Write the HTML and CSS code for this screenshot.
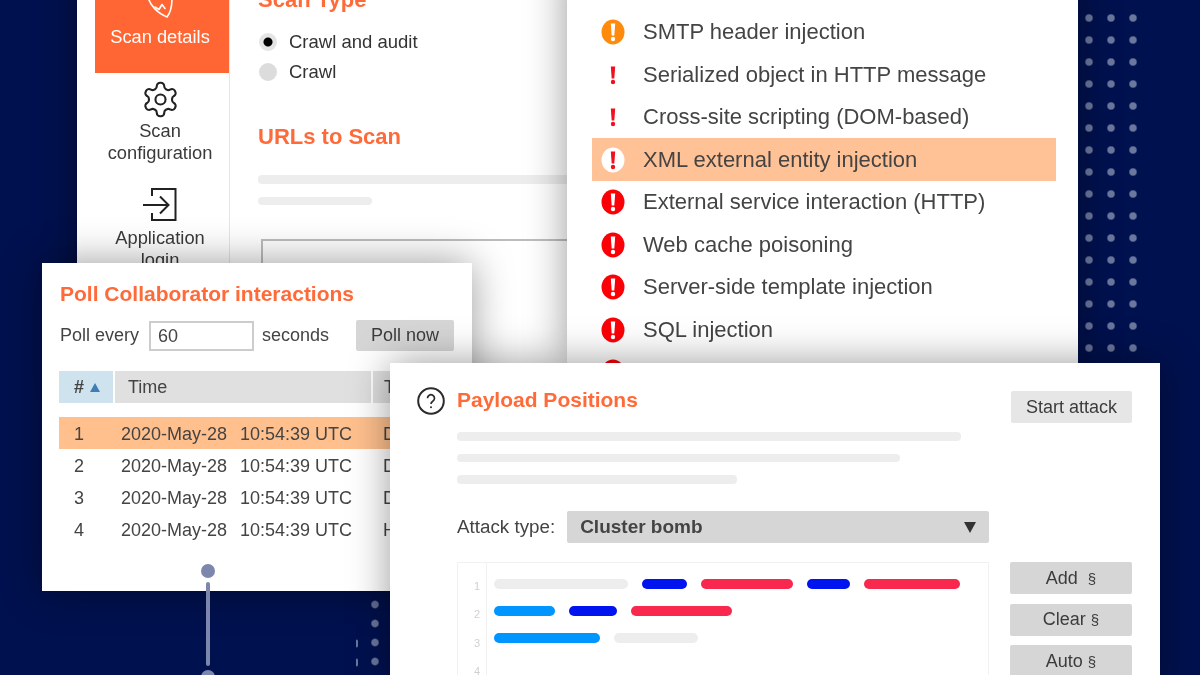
FILE: index.html
```html
<!DOCTYPE html>
<html lang="en">
<head>
    <meta charset="UTF-8">
    <meta name="viewport" content="width=device-width, initial-scale=1.0">
    <title>Scanner windows</title>
    <link rel="stylesheet" href="styles.css">
</head>
<body>
    <svg class="defs" width="0" height="0" aria-hidden="true">
        <symbol id="alert" viewBox="0 0 24 26">
            <ellipse cx="12" cy="13" rx="11.5" ry="12.5" fill="currentColor"></ellipse>
            <path d="M9.8 4.5h4.4l-.9 12h-2.6z" fill="var(--mark)"></path>
            <circle cx="12" cy="20" r="2.2" fill="var(--mark)"></circle>
        </symbol>
    </svg>

    <div class="stage">
        <div class="dots dots-right"></div>
        <div class="dots dots-left"></div>
        <div class="dots dots-clip"></div>

        <section class="window scan-window">
            <nav class="sidebar">
                <div class="nav-tile">
                    <svg class="shield-icon" width="34" height="18" viewBox="0 0 34 18" fill="none" stroke="#fff" stroke-width="1.6" stroke-linejoin="round" stroke-linecap="round">
                        <path d="M5 -2l3 6q6 9 16 13q5-6 5-19"></path>
                        <path d="M12 7l4 2.5l3-5l3 4"></path>
                    </svg>
                    <span>Scan details</span>
                </div>
                <div class="nav-item">
                    <svg width="37" height="37" viewBox="1 1 22 22" fill="none" stroke="#222" stroke-width="1.25">
                        <path d="M12.22 2h-.44a2 2 0 0 0-2 2v.18a2 2 0 0 1-1 1.73l-.43.25a2 2 0 0 1-2 0l-.15-.08a2 2 0 0 0-2.73.73l-.22.38a2 2 0 0 0 .73 2.73l.15.1a2 2 0 0 1 1 1.72v.51a2 2 0 0 1-1 1.74l-.15.09a2 2 0 0 0-.73 2.73l.22.38a2 2 0 0 0 2.73.73l.15-.08a2 2 0 0 1 2 0l.43.25a2 2 0 0 1 1 1.73V20a2 2 0 0 0 2 2h.44a2 2 0 0 0 2-2v-.18a2 2 0 0 1 1-1.73l.43-.25a2 2 0 0 1 2 0l.15.08a2 2 0 0 0 2.73-.73l.22-.39a2 2 0 0 0-.73-2.73l-.15-.08a2 2 0 0 1-1-1.74v-.5a2 2 0 0 1 1-1.74l.15-.09a2 2 0 0 0 .73-2.73l-.22-.38a2 2 0 0 0-2.73-.73l-.15.08a2 2 0 0 1-2 0l-.43-.25a2 2 0 0 1-1-1.73V4a2 2 0 0 0-2-2z"></path>
                        <circle cx="12" cy="12" r="3"></circle>
                    </svg>
                    <span>Scan<br>configuration</span>
                </div>
                <div class="nav-item nav-login">
                    <svg width="36" height="35" viewBox="0 0 36 35" fill="none" stroke="#222" stroke-width="2">
                        <path d="M10 9V2h23.5v31H10v-7"></path>
                        <path d="M1 18h25"></path>
                        <path d="M18 9.500l8.500 8.500l-8.500 8.500"></path>
                    </svg>
                    <span>Application<br>login</span>
                </div>
            </nav>
            <div class="scan-main">
                <h2 class="heading">Scan Type</h2>
                <div class="radio-row"><i class="radio radio-on"></i>Crawl and audit</div>
                <div class="radio-row"><i class="radio"></i>Crawl</div>
                <h2 class="heading urls-heading">URLs to Scan</h2>
                <div class="skeleton urls-line-1"></div>
                <div class="skeleton urls-line-2"></div>
                <div class="urls-box"></div>
            </div>
        </section>

        <section class="window issues-window">
            <ul class="issues">
                <li class="issue issue-clipped"><svg class="alert alert-low"><use href="#alert"></use></svg>Suspicious input transformation (reflected)</li>
                <li class="issue"><svg class="alert alert-med"><use href="#alert"></use></svg>SMTP header injection</li>
                <li class="issue"><svg class="alert alert-low"><use href="#alert"></use></svg>Serialized object in HTTP message</li>
                <li class="issue"><svg class="alert alert-low"><use href="#alert"></use></svg>Cross-site scripting (DOM-based)</li>
                <li class="issue issue-selected"><svg class="alert alert-sel"><use href="#alert"></use></svg>XML external entity injection</li>
                <li class="issue"><svg class="alert"><use href="#alert"></use></svg>External service interaction (HTTP)</li>
                <li class="issue"><svg class="alert"><use href="#alert"></use></svg>Web cache poisoning</li>
                <li class="issue"><svg class="alert"><use href="#alert"></use></svg>Server-side template injection</li>
                <li class="issue"><svg class="alert"><use href="#alert"></use></svg>SQL injection</li>
                <li class="issue"><svg class="alert"><use href="#alert"></use></svg>OS command injection</li>
            </ul>
        </section>

        <section class="window poll-window">
            <h2 class="heading poll-heading">Poll Collaborator interactions</h2>
            <div class="poll-bar">
                <span>Poll every</span>
                <div class="poll-input">60</div>
                <span>seconds</span>
                <button class="btn poll-btn">Poll now</button>
            </div>
            <div class="poll-head">
                <div class="head-cell head-sort"># <i class="sort-arrow"></i></div>
                <div class="head-cell head-time">Time</div>
                <div class="head-cell head-type">Type</div>
            </div>
            <div class="poll-row poll-row-on"><span class="col-num">1</span><span class="col-date">2020-May-28</span><span class="col-time">10:54:39 UTC</span><span>DNS</span></div>
            <div class="poll-row"><span class="col-num">2</span><span class="col-date">2020-May-28</span><span class="col-time">10:54:39 UTC</span><span>DNS</span></div>
            <div class="poll-row"><span class="col-num">3</span><span class="col-date">2020-May-28</span><span class="col-time">10:54:39 UTC</span><span>DNS</span></div>
            <div class="poll-row"><span class="col-num">4</span><span class="col-date">2020-May-28</span><span class="col-time">10:54:39 UTC</span><span>HTTP</span></div>
        </section>

        <div class="connector">
            <i class="connector-dot"></i>
            <i class="connector-line"></i>
            <i class="connector-dot"></i>
        </div>

        <section class="window payload-window">
            <svg class="help-icon" width="28" height="28" viewBox="0 0 28 28" fill="none" stroke="#2b2b2b" stroke-width="2">
                <circle cx="14" cy="14" r="12.8"></circle>
                <path d="M10.500 11.200a3.500 3.500 0 1 1 5.300 3c-1.200.8-1.800 1.400-1.800 2.800" stroke-width="1.700"></path>
                <circle cx="14" cy="20.300" r="1" fill="#2b2b2b" stroke="none"></circle>
            </svg>
            <div class="payload-main">
                <h2 class="heading payload-heading">Payload Positions</h2>
                <div class="skeleton payload-line-1"></div>
                <div class="skeleton payload-line-2"></div>
                <div class="skeleton payload-line-3"></div>
                <div class="attack-row">
                    <span>Attack type:</span>
                    <div class="attack-select">Cluster bomb<i class="select-arrow"></i></div>
                </div>
                <div class="editor">
                    <div class="gutter"><span>1</span><span>2</span><span>3</span><span>4</span></div>
                    <div class="code">
                        <div class="code-line">
                            <i class="pill pill-grey" style="width:134px"></i>
                            <i class="pill pill-blue" style="width:45px"></i>
                            <i class="pill pill-red" style="width:92px"></i>
                            <i class="pill pill-blue" style="width:43px"></i>
                            <i class="pill pill-red" style="width:96px"></i>
                        </div>
                        <div class="code-line">
                            <i class="pill pill-sky" style="width:61px"></i>
                            <i class="pill pill-blue" style="width:48px"></i>
                            <i class="pill pill-red" style="width:101px"></i>
                        </div>
                        <div class="code-line">
                            <i class="pill pill-sky" style="width:106px"></i>
                            <i class="pill pill-grey" style="width:84px"></i>
                        </div>
                    </div>
                </div>
            </div>
            <div class="payload-actions">
                <button class="btn btn-light">Start attack</button>
                <div class="marker-btns">
                    <button class="btn">Add &nbsp;<span class="section-sign">§</span></button>
                    <button class="btn">Clear <span class="section-sign">§</span></button>
                    <button class="btn">Auto <span class="section-sign">§</span></button>
                </div>
            </div>
        </section>
    </div>
</body>
</html>
```

FILE: styles.css
```css
*,
*:before,
*:after {
    padding: 0;
    margin: 0;
    box-sizing: border-box;
}
body {
    background-color: #00114f;
    font-family: 'Liberation Sans', Arial, sans-serif;
    color: #444444;
    overflow: hidden;
}
i {
    display: block;
}
.defs {
    position: absolute;
}
.stage {
    position: relative;
    width: 1200px;
    height: 675px;
    overflow: hidden;
    background-color: #00114f;
    filter: blur(0.6px);
}
.window {
    position: absolute;
    background-color: #ffffff;
    overflow: hidden;
    box-shadow: 0 0 38px rgba(0, 0, 0, 0.4);
}
.heading {
    color: #ff6a39;
    font-weight: 700;
}

/* dotted background */
.dots {
    position: absolute;
    background-image: radial-gradient(circle, #6c779e 3px, rgba(108, 119, 158, 0) 4.5px);
}
.dots-right {
    left: 1078px;
    top: 7px;
    width: 66px;
    height: 352px;
    background-size: 22px 22px;
}
.dots-left {
    left: 364px;
    top: 595px;
    width: 22px;
    height: 80px;
    background-size: 22px 19px;
}
.dots-clip {
    left: 356px;
    top: 634px;
    width: 2px;
    height: 38px;
    background-size: 6px 19px;
    background-position: -3px 0;
}

/* scan window */
.scan-window {
    left: 77px;
    top: -40px;
    width: 560px;
    height: 430px;
    display: flex;
}
.sidebar {
    width: 153px;
    padding-left: 18px;
    border-right: 1px solid #e6e6e6;
    font-size: 18.3px;
    line-height: 22px;
    text-align: center;
    flex-shrink: 0;
}
.nav-tile {
    width: 134px;
    height: 113px;
    padding: 40px 4px 0 0;
    background-color: #ff6633;
    color: #ffffff;
}
.shield-icon {
    display: block;
    margin: 0 auto 8px;
}
.nav-item {
    width: 134px;
    margin-top: 8px;
    padding-right: 4px;
    color: #3a3a3a;
}
.nav-item svg {
    display: block;
    margin: 0 auto 2px;
}
.nav-login {
    margin-top: 23px;
}
.nav-login svg {
    margin-bottom: 5px;
}
.scan-main {
    flex: 1;
    padding: 28px 0 0 28px;
}
.scan-main .heading {
    font-size: 22px;
    line-height: 24px;
}
.radio-row {
    display: flex;
    align-items: center;
    height: 30px;
    font-size: 18.5px;
    color: #333333;
}
.radio-row:first-of-type {
    margin-top: 15px;
}
.radio {
    width: 18px;
    height: 18px;
    margin: 0 12px 0 1px;
    border-radius: 50%;
    background-color: #dcdcdc;
}
.radio-on {
    background: radial-gradient(circle, #000000 4px, #e4e4e4 5px);
}
.scan-main .urls-heading {
    margin-top: 36px;
    line-height: 28px;
}
.skeleton {
    height: 8.5px;
    border-radius: 4px;
    background-color: #ededed;
}
.urls-line-1 {
    margin-top: 24px;
}
.urls-line-2 {
    width: 114px;
    margin-top: 13px;
}
.urls-box {
    height: 200px;
    margin: 34px 0 0 3px;
    border: 2px solid #bdbdbd;
}

/* issue list */
.issues-window {
    left: 567px;
    top: -40px;
    width: 511px;
    height: 403px;
    padding: 8.25px 0 0 25px;
}
.issues {
    width: 464px;
    list-style: none;
}
.issue {
    display: flex;
    align-items: center;
    gap: 18px;
    height: 42.5px;
    padding-left: 9px;
    font-size: 22px;
    white-space: nowrap;
}
.issue-clipped {
    padding-bottom: 3px;
}
.issue-selected {
    background-color: #ffc196;
}
.alert {
    width: 24px;
    height: 26px;
    flex-shrink: 0;
    color: #fb0007;
    --mark: #ffffff;
}
.alert-med {
    color: #ff8a0c;
}
.alert-low {
    color: transparent;
    --mark: #f01020;
}
.alert-sel {
    color: #ffffff;
    --mark: #f01020;
}

/* poll window */
.poll-window {
    left: 42px;
    top: 263px;
    width: 430px;
    height: 328px;
    padding: 20px 17px 0;
}
.poll-heading {
    margin-left: 1px;
    font-size: 21px;
    line-height: 22px;
}
.poll-bar {
    display: flex;
    align-items: center;
    margin-top: 15px;
    padding-left: 1px;
    height: 31px;
    font-size: 18px;
}
.poll-input {
    width: 105px;
    height: 30px;
    margin: 0 8px 0 10px;
    padding-left: 7px;
    border: 2px solid #cccccc;
    line-height: 26px;
}
.btn {
    display: block;
    height: 32px;
    border: 0;
    border-radius: 2px;
    background-color: #d6d6d6;
    color: #3c3c3c;
    font-family: inherit;
    font-size: 18px;
}
.section-sign {
    font-size: 15px;
}
.poll-btn {
    width: 98px;
    height: 31px;
    margin-left: 27px;
}
.poll-head {
    display: flex;
    gap: 2px;
    height: 32px;
    margin-top: 20px;
    font-size: 18px;
    line-height: 32px;
}
.head-cell {
    background-color: #e0e0e0;
    white-space: nowrap;
    overflow: hidden;
}
.head-sort {
    display: flex;
    align-items: center;
    gap: 6px;
    width: 54px;
    padding-left: 15px;
    background-color: #cfe3ef;
    font-weight: 700;
}
.sort-arrow {
    width: 0;
    height: 0;
    border-left: 5.5px solid transparent;
    border-right: 5.5px solid transparent;
    border-bottom: 9px solid #3f7db5;
}
.head-time {
    width: 256px;
    padding-left: 13px;
}
.head-type {
    flex: 1;
    padding-left: 11px;
}
.poll-row {
    display: flex;
    height: 32px;
    font-size: 18px;
    line-height: 34px;
    white-space: nowrap;
}
.poll-head + .poll-row {
    margin-top: 14px;
}
.poll-row-on {
    background-color: #ffc08e;
}
.col-num {
    width: 62px;
    padding-left: 15px;
}
.col-date {
    width: 119px;
}
.col-time {
    width: 143px;
}

/* connector below the poll window */
.connector {
    position: absolute;
    left: 201px;
    top: 564px;
    width: 14px;
    display: flex;
    flex-direction: column;
    align-items: center;
    gap: 4px;
}
.connector-dot {
    width: 14px;
    height: 14px;
    border-radius: 50%;
    background-color: #7d87ad;
}
.connector-line {
    width: 3.5px;
    height: 84px;
    border-radius: 2px;
    background-color: #7d87ad;
}

/* payload window */
.payload-window {
    left: 390px;
    top: 363px;
    width: 770px;
    height: 330px;
    padding: 27px 28px 0 27px;
    display: flex;
}
.help-icon {
    flex-shrink: 0;
    margin: -3px 12px 0 0;
}
.payload-main {
    width: 532px;
    flex-shrink: 0;
}
.payload-heading {
    font-size: 21px;
    line-height: 20px;
}
.payload-line-1 {
    width: 504px;
    margin-top: 22px;
}
.payload-line-2 {
    width: 443px;
    margin-top: 13px;
}
.payload-line-3 {
    width: 280px;
    margin-top: 13px;
}
.attack-row {
    display: flex;
    align-items: center;
    gap: 12px;
    margin-top: 27.5px;
    font-size: 18.8px;
}
.attack-select {
    flex: 1;
    display: flex;
    align-items: center;
    justify-content: space-between;
    height: 32px;
    padding: 0 13px;
    border-radius: 2px;
    background-color: #d6d6d6;
    font-size: 19px;
    font-weight: 700;
}
.select-arrow {
    width: 0;
    height: 0;
    border-left: 6px solid transparent;
    border-right: 6px solid transparent;
    border-top: 11px solid #333333;
}
.editor {
    display: flex;
    height: 140px;
    margin-top: 19px;
    border: 1px solid #f1f1f1;
}
.gutter {
    width: 29px;
    padding: 9px 6px 0 0;
    border-right: 1px solid #f1f1f1;
    text-align: right;
    font-size: 11px;
    line-height: 28.3px;
    color: #d0d0d0;
}
.gutter span {
    display: block;
}
.code {
    padding: 16px 0 0 7px;
}
.code-line {
    display: flex;
    gap: 14px;
    height: 10px;
    margin-bottom: 17px;
}
.pill {
    height: 10px;
    border-radius: 5px;
}
.pill-grey {
    background-color: #ededed;
}
.pill-blue {
    background-color: #0014f0;
}
.pill-red {
    background-color: #f8284e;
}
.pill-sky {
    background-color: #0095ff;
}
.payload-actions {
    width: 122px;
    margin: 1px 0 0 21px;
    flex-shrink: 0;
}
.btn-light {
    width: 121px;
    margin-left: 1px;
    background-color: #e6e6e6;
}
.marker-btns {
    display: flex;
    flex-direction: column;
    gap: 9.5px;
    margin-top: 139px;
}
.marker-btns .btn {
    width: 100%;
}
```
